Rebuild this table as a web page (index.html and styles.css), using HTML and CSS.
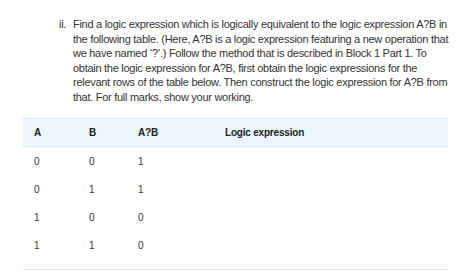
FILE: index.html
```html
<!DOCTYPE html>
<html>
<head>
<meta charset="utf-8">
<link rel="stylesheet" href="styles.css">
</head>
<body>
<div class="page">
  <div class="question">
    <span class="marker">ii.</span>
    <p class="text">Find a logic expression which is logically equivalent to the logic expression A?B in<br>the following table. (Here, A?B is a logic expression featuring a new operation that<br>we have named ‘?’.) Follow the method that is described in Block 1 Part 1. To<br>obtain the logic expression for A?B, first obtain the logic expressions for the<br>relevant rows of the table below. Then construct the logic expression for A?B from<br>that. For full marks, show your working.</p>
  </div>
  <div class="table-wrap">
    <table class="truth">
      <thead>
        <tr><th class="c1">A</th><th class="c2">B</th><th class="c3">A?B</th><th class="c4">Logic expression</th></tr>
      </thead>
      <tbody>
        <tr><td>0</td><td>0</td><td>1</td><td></td></tr>
        <tr><td>0</td><td>1</td><td>1</td><td></td></tr>
        <tr><td>1</td><td>0</td><td>0</td><td></td></tr>
        <tr><td>1</td><td>1</td><td>0</td><td></td></tr>
      </tbody>
    </table>
  </div>
</div>
</body>
</html>
```
FILE: styles.css
```css
html, body {
  margin: 0;
  padding: 0;
  background: #ffffff;
}
.page {
  font-family: "Liberation Sans", Arial, sans-serif;
  color: #333333;
  padding: 17px 26px 0 23px;
}
.question {
  display: flex;
  padding-left: 36px;
  font-size: 11px;
  letter-spacing: -0.28px;
  line-height: 14.6px;
}
.marker {
  width: 14px;
  flex: none;
}
.text {
  margin: 0;
  flex: 1;
  white-space: nowrap;
}
.table-wrap {
  margin-top: 13px;
  border-bottom: 1px solid #d9e8f0;
  padding-bottom: 10px;
}
.truth {
  width: 100%;
  border-collapse: collapse;
  font-size: 10px;
  letter-spacing: -0.2px;
}
.truth th {
  background: #eaf5fc;
  border-top: 1px solid #d6e8f2;
  border-bottom: 1px solid #d6e8f2;
  text-align: left;
  font-weight: bold;
  height: 27px;
  padding: 0 0 0 11px;
  color: #222;
}
.truth td {
  height: 27px;
  padding: 0 0 0 11px;
  padding-top: 1px;
}
.c1 { width: 44px; }
.c2 { width: 38px; }
.c3 { width: 76px; }
```
